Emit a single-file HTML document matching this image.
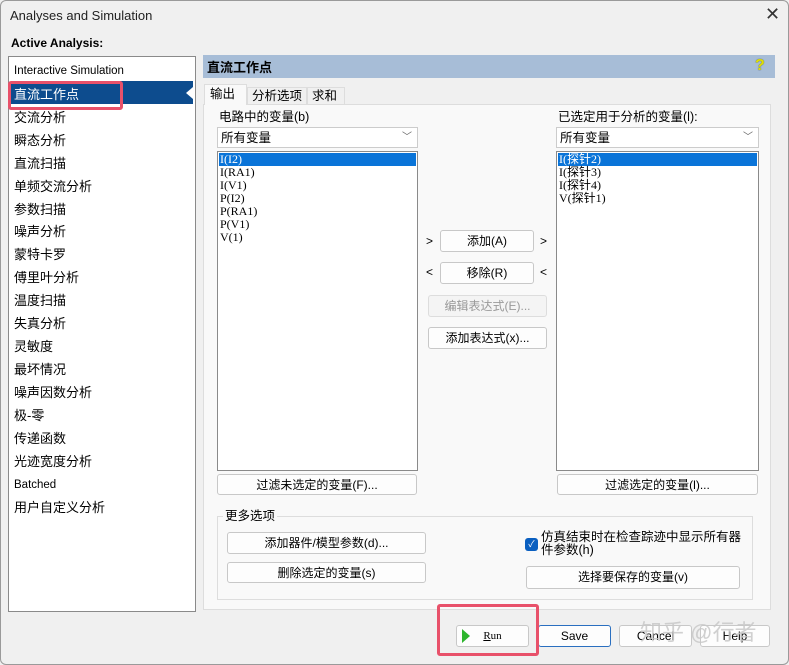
<!DOCTYPE html>
<html><head><meta charset="utf-8"><style>
*{margin:0;padding:0;box-sizing:border-box}
body{width:789px;height:665px;background:#f0f0f0;font-family:"Liberation Sans","Noto Sans CJK SC",sans-serif;font-size:12px;line-height:15px;color:#000;position:relative;overflow:hidden}
.a{position:absolute;white-space:nowrap}
.btn{position:absolute;background:#fdfdfd;border:1px solid #c8c8c8;border-radius:3px;text-align:center;font-size:12px;line-height:20px}
.box{position:absolute;background:#fff;border:1px solid #8a8a8a}
.li{position:absolute;left:14px;font-size:13px;line-height:16px}
.v{position:absolute;left:2px;font-family:"Liberation Serif","Noto Sans CJK SC",serif;font-size:12px;line-height:13px}
</style></head><body>
<div class="a" style="left:0;top:0;width:789px;height:665px;border:1px solid #9a9a9a;border-radius:6px"></div>
<div class="a" style="left:10px;top:8px;font-size:13px;color:#222">Analyses and Simulation</div>
<div class="a" style="left:765px;top:4px;font-size:18px;line-height:20px;color:#333">✕</div>
<div class="a" style="left:11px;top:36px;font-weight:bold;font-size:12px">Active Analysis:</div>

<div class="box" style="left:8px;top:56px;width:188px;height:556px">
<div class="li" style="left:5px;top:6px;font-size:11.5px">Interactive Simulation</div>
<div class="a" style="left:2px;top:24px;width:182px;height:23px;background:#0d4c8e"></div>
<div class="a" style="left:177px;top:30px;width:0;height:0;border-top:6px solid transparent;border-bottom:6px solid transparent;border-right:7px solid #fff"></div>
<div class="li" style="left:5px;top:30px;color:#fff">直流工作点</div>
<div class="li" style="left:5px;top:53px">交流分析</div>
<div class="li" style="left:5px;top:76px">瞬态分析</div>
<div class="li" style="left:5px;top:99px">直流扫描</div>
<div class="li" style="left:5px;top:122px">单频交流分析</div>
<div class="li" style="left:5px;top:145px">参数扫描</div>
<div class="li" style="left:5px;top:167px">噪声分析</div>
<div class="li" style="left:5px;top:190px">蒙特卡罗</div>
<div class="li" style="left:5px;top:213px">傅里叶分析</div>
<div class="li" style="left:5px;top:236px">温度扫描</div>
<div class="li" style="left:5px;top:259px">失真分析</div>
<div class="li" style="left:5px;top:282px">灵敏度</div>
<div class="li" style="left:5px;top:305px">最坏情况</div>
<div class="li" style="left:5px;top:328px">噪声因数分析</div>
<div class="li" style="left:5px;top:351px">极-零</div>
<div class="li" style="left:5px;top:374px">传递函数</div>
<div class="li" style="left:5px;top:397px">光迹宽度分析</div>
<div class="li" style="left:5px;top:420px;font-size:11.5px">Batched</div>
<div class="li" style="left:5px;top:443px">用户自定义分析</div>
</div>
<div class="a" style="left:8px;top:81px;width:115px;height:29px;border:3px solid #e8516a;border-radius:3px"></div>

<div class="a" style="left:203px;top:55px;width:572px;height:23px;background:#a7bdd7"></div>
<div class="a" style="left:207px;top:60px;font-weight:bold;font-size:13px;line-height:16px">直流工作点</div>
<div class="a" style="left:755px;top:57px;font-size:16px;line-height:18px;font-weight:bold;color:#e0e000;text-shadow:0 0 1px #333">?</div>

<div class="a" style="left:203px;top:104px;width:568px;height:506px;background:#f9f9f9;border:1px solid #ddd"></div>
<div class="a" style="left:204px;top:84px;width:43px;height:21px;background:#f9f9f9;border:1px solid #ddd;border-bottom:none"></div>
<div class="a" style="left:210px;top:87px;font-size:12.5px">输出</div>
<div class="a" style="left:247px;top:87px;width:60px;height:17px;background:#f0f0f0;border:1px solid #ddd;border-bottom:none"></div>
<div class="a" style="left:252px;top:89px;font-size:12.5px">分析选项</div>
<div class="a" style="left:307px;top:87px;width:38px;height:17px;background:#f0f0f0;border:1px solid #ddd;border-bottom:none"></div>
<div class="a" style="left:312px;top:89px;font-size:12.5px">求和</div>

<div class="a" style="left:219px;top:110px;font-size:12.5px">电路中的变量(b)</div>
<div class="box" style="left:217px;top:127px;width:201px;height:21px;border-color:#ccc"><span class="a" style="left:3px;top:3px;font-size:12.5px">所有变量</span><span class="a" style="right:5px;top:2px;color:#666;font-size:10px">﹀</span></div>
<div class="box" style="left:217px;top:151px;width:201px;height:320px">
<div class="a" style="left:1px;top:1px;width:197px;height:13px;background:#0a74d8"></div>
<div class="v" style="top:1px;color:#fff">I(I2)</div>
<div class="v" style="top:14px">I(RA1)</div>
<div class="v" style="top:27px">I(V1)</div>
<div class="v" style="top:40px">P(I2)</div>
<div class="v" style="top:53px">P(RA1)</div>
<div class="v" style="top:66px">P(V1)</div>
<div class="v" style="top:79px">V(1)</div>
</div>

<div class="a" style="left:558px;top:110px;font-size:12.5px">已选定用于分析的变量(l):</div>
<div class="box" style="left:556px;top:127px;width:203px;height:21px;border-color:#ccc"><span class="a" style="left:3px;top:3px;font-size:12.5px">所有变量</span><span class="a" style="right:5px;top:2px;color:#666;font-size:10px">﹀</span></div>
<div class="box" style="left:556px;top:151px;width:203px;height:320px">
<div class="a" style="left:1px;top:1px;width:199px;height:13px;background:#0a74d8"></div>
<div class="v" style="top:1px;color:#fff">I(探针2)</div>
<div class="v" style="top:14px">I(探针3)</div>
<div class="v" style="top:27px">I(探针4)</div>
<div class="v" style="top:40px">V(探针1)</div>
</div>

<div class="a" style="left:426px;top:234px">&gt;</div><div class="a" style="left:540px;top:234px">&gt;</div>
<div class="btn" style="left:440px;top:230px;width:94px;height:22px">添加(A)</div>
<div class="a" style="left:426px;top:265px">&lt;</div><div class="a" style="left:540px;top:265px">&lt;</div>
<div class="btn" style="left:440px;top:262px;width:94px;height:22px">移除(R)</div>
<div class="btn" style="left:428px;top:295px;width:119px;height:22px;color:#999;background:#f4f4f4;border-color:#ddd">编辑表达式(E)...</div>
<div class="btn" style="left:428px;top:327px;width:119px;height:22px">添加表达式(x)...</div>

<div class="btn" style="left:217px;top:474px;width:200px;height:21px">过滤未选定的变量(F)...</div>
<div class="btn" style="left:557px;top:474px;width:201px;height:21px">过滤选定的变量(l)...</div>

<div class="a" style="left:217px;top:516px;width:536px;height:84px;border:1px solid #ddd"></div>
<div class="a" style="left:223px;top:509px;background:#f9f9f9;padding:0 2px;font-size:12.5px">更多选项</div>
<div class="btn" style="left:227px;top:532px;width:199px;height:22px">添加器件/模型参数(d)...</div>
<div class="btn" style="left:227px;top:562px;width:199px;height:21px">删除选定的变量(s)</div>
<div class="a" style="left:525px;top:538px;width:13px;height:13px;background:#0a5fc0;border-radius:3px;color:#fff;font-size:9px;line-height:13px;text-align:center">✓</div>
<div class="a" style="left:541px;top:531px;font-size:12.5px;line-height:13px">仿真结束时在检查踪迹中显示所有器<br>件参数(h)</div>
<div class="btn" style="left:526px;top:566px;width:214px;height:23px">选择要保存的变量(v)</div>

<div class="btn" style="left:456px;top:625px;width:73px;height:22px;font-family:'Liberation Serif',serif;font-size:11px"><span style="text-decoration:underline">R</span>un</div>
<div class="a" style="left:462px;top:629px;width:0;height:0;border-top:7px solid transparent;border-bottom:7px solid transparent;border-left:8px solid #2db52d"></div>
<div class="btn" style="left:538px;top:625px;width:73px;height:22px;border-color:#2a6fc0">Save</div>
<div class="btn" style="left:619px;top:625px;width:73px;height:22px">Cancel</div>
<div class="btn" style="left:700px;top:625px;width:70px;height:22px">Help</div>
<div class="a" style="left:437px;top:604px;width:102px;height:52px;border:3px solid #e8516a;border-radius:3px"></div>
<div class="a" style="left:640px;top:620px;font-size:22px;line-height:26px;color:rgba(200,200,200,0.85)">知乎 @行者</div>
</body></html>
